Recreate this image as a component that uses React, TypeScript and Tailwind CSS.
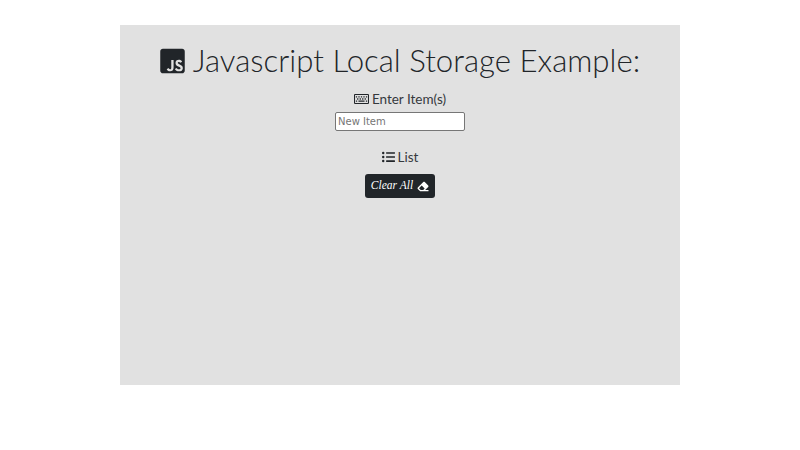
// Local storage example page
import { FaEraser, FaJsSquare, FaListUl, FaRegKeyboard } from "react-icons/fa";

export default function App() {
  return (
    <div className="min-h-[450px] bg-white pt-[25px] font-['Lato',sans-serif] text-[#212529]">
      <div className="mx-auto flex h-[360px] w-[560px] flex-col items-center bg-[#e1e1e1] pt-[15px]">
        {/* ── Header ── */}
        <h1 className="flex h-[40px] items-center gap-[8px] text-[31.2px] font-light leading-[40px]">
          <FaJsSquare className="mt-[1px] h-[28px] w-[25px]" />
          <span>Javascript Local Storage Example:</span>
        </h1>

        {/* ── New item ── */}
        <label className="mt-[9px] flex h-[20px] items-center gap-[3px] text-[13.5px] text-[#35393d]">
          <FaRegKeyboard className="h-[14px] w-[15px] text-[#212529]" />
          <span>Enter Item(s)</span>
        </label>
        <input
          type="text"
          placeholder="New Item"
          className="mt-[3px] h-[18.5px] w-[130px] rounded-[2px] border border-[#767676] bg-white px-[2px] font-['DejaVu_Sans',sans-serif] text-[10px] placeholder:text-[#757575]"
        />

        {/* ── List ── */}
        <div className="mt-[16.5px] flex h-[20px] items-center gap-[3px] text-[13.5px] text-[#35393d]">
          <FaListUl className="h-[14px] w-[13px] text-[#212529]" />
          <span>List</span>
        </div>
        <button className="mt-[7px] flex h-[24px] w-[70px] items-center justify-center gap-[4px] rounded-[3px] bg-[#212529] font-['Liberation_Serif',cursive] text-[11.5px] italic text-white">
          <span>Clear All</span>
          <FaEraser className="h-[11px] w-[12px]" />
        </button>
      </div>
    </div>
  );
}
